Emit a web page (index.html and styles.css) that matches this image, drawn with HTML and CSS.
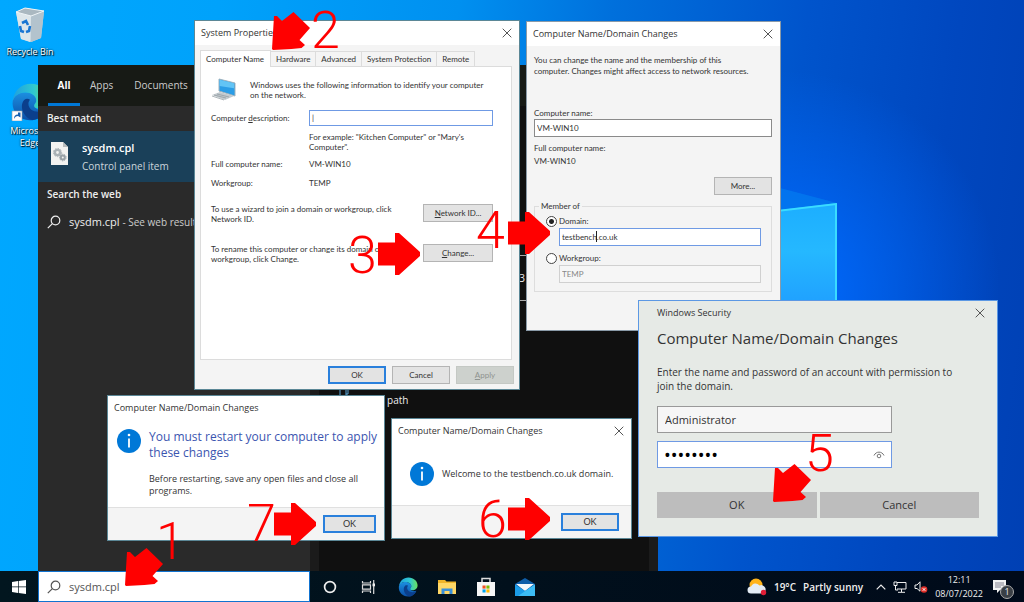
FILE: index.html
```html
<!DOCTYPE html>
<html lang="en">
<head>
<meta charset="utf-8">
<title>Join a domain</title>
<link rel="stylesheet" href="styles.css">
</head>
<body>
<svg width="0" height="0" class="defs" aria-hidden="true">
  <defs>
    <linearGradient id="edgeA" x1="0" y1="0" x2="1" y2="0"><stop offset="0" stop-color="#1ea0e0"/><stop offset=".6" stop-color="#30c8d0"/><stop offset="1" stop-color="#6be25a"/></linearGradient>
    <linearGradient id="edgeB" x1="0" y1="0" x2="0" y2="1"><stop offset="0" stop-color="#1c8fe0"/><stop offset="1" stop-color="#0a4fa8"/></linearGradient>
    <symbol id="edge" viewBox="0 0 24 24">
      <path fill="url(#edgeB)" d="M1 13C1 8 5 6 9 6c5 0 7 3 7 5 0 1-.6 1.800-1 2.300-.6 2.700 2.500 4.700 7 3.200C20 21 16.500 23.500 12 23.500 5 23.500 1 18 1 13z"/>
      <path fill="url(#edgeA)" d="M1 12C1.500 5 6.500.5 12.500.5c6.500 0 11 4.500 11 9.500 0 4-3 6-6 6-2.500 0-3.500-1-2.500-2.700.5-.8 1-1.300 1-2.300 0-2-2-5-7-5-4 0-7.500 2.500-8 6z"/>
      <path fill="#0b3f8c" d="M8.500 10.500C5 14 7.500 21.500 13.500 23.400 17 23.200 20 21 22 17c-5 2.500-11 1-11-4 0-1 .5-2 1-2.500-1.200-.7-2.500-.7-3.500 0z"/>
    </symbol>
    <symbol id="close" viewBox="0 0 10 10"><path d="M.7.7l8.600 8.600M9.300.7L.7 9.300" stroke="#555" stroke-width="1" fill="none"/></symbol>
    <symbol id="info" viewBox="0 0 24 24"><circle cx="12" cy="12" r="12" fill="#0078d7"/><circle cx="12" cy="6" r="1.300" fill="#fff"/><path d="M12 9.500v9" stroke="#fff" stroke-width="1.800"/></symbol>
    <symbol id="lens" viewBox="0 0 14 14"><circle cx="8.500" cy="5.500" r="4.300" fill="none" stroke="currentColor" stroke-width="1.200"/><path d="M5.400 8.600L.8 13.200" stroke="currentColor" stroke-width="1.200"/></symbol>
    <symbol id="arrow-right" viewBox="0 0 42 42"><path fill="#f00" d="M0 9.500h17V0h4l21 19v4L21 42h-4v-9.500H0z"/></symbol>
    <symbol id="arrow-down" viewBox="0 0 38 38"><path fill="#f00" d="M2 4h3l5 5L21.500 0 38 16 27.500 28l5.500 5-3.500 3-10 1L1 38 0 37z"/></symbol>
  </defs>
</svg>

<div class="screen">
  <main class="desktop">
    <svg class="wallpaper-pane" viewBox="0 0 160 124" aria-hidden="true">
      <defs><linearGradient id="pane" x1="0" y1="0" x2="0" y2="1"><stop offset="0" stop-color="#1caeff"/><stop offset=".45" stop-color="#25b8ff"/><stop offset="1" stop-color="#1f9eff"/></linearGradient></defs>
      <path d="M60 0v27l77-10L80 2z" fill="#0590f5" opacity=".4"/>
      <path d="M0 34l137-17v107H0z" fill="url(#pane)"/>
      <path d="M0 34l136-16v106" fill="none" stroke="#3adcff" stroke-width="2"/>
    </svg>

    <a href="#" class="shortcut shortcut-bin">
      <svg class="shortcut-icon" viewBox="0 0 32 36" aria-hidden="true">
        <path d="M2 5l9-4 19 3-3 27-10 4-10-3z" fill="#c9d6de"/>
        <path d="M2 5l15 4-1 26-9-3z" fill="#dde6ea"/>
        <path d="M17 9l13-5-3 27-10 4z" fill="#b3c3cd"/>
        <path d="M2 5l9-4 19 3-13 5z" fill="#aab8c0" stroke="#eef4f7"/>
        <path d="M8 16l4-2 2 4M16 19l-1 5-3 1M10 25l-3-1-1-5" fill="none" stroke="#1976d2" stroke-width="2.600"/>
      </svg>
      <span>Recycle Bin</span>
    </a>
    <a href="#" class="shortcut shortcut-edge">
      <svg class="shortcut-icon edge-big" viewBox="0 0 38 38" aria-hidden="true">
        <use href="#edge" width="38" height="38"/>
        <path d="M1 28h10v10H1z" fill="#fff" stroke="#8a9aa5" stroke-width=".6"/>
        <path d="M3 36c0-3 1-4.500 4-4.500V29.500h2.500v5L7 33c-2 0-3 1-4 3z" fill="#1660b0"/>
      </svg>
      <span>Microsoft Edge</span>
    </a>

    <section class="search-panel" aria-label="Search">
      <nav class="scopes">
        <a href="#" class="scope scope-active">All</a>
        <a href="#" class="scope">Apps</a>
        <a href="#" class="scope">Documents</a>
      </nav>
      <div class="results">
        <div class="results-list">
          <h2>Best match</h2>
          <a href="#" class="best">
            <svg class="file-icon" viewBox="0 0 17 23" aria-hidden="true"><path d="M0 0h12l5 5v18H0z" fill="#f2f2f0"/><path d="M12 0v5h5z" fill="#b9bdbd"/><circle cx="6.500" cy="10.500" r="2.600" fill="none" stroke="#aab2b6" stroke-width="2.400"/><circle cx="6.500" cy="10.500" r="4.100" fill="none" stroke="#aab2b6" stroke-dasharray="1.500 1.200"/><circle cx="11.800" cy="15.500" r="2" fill="none" stroke="#98a1a6" stroke-width="2"/><circle cx="11.800" cy="15.500" r="3.300" fill="none" stroke="#98a1a6" stroke-dasharray="1.300 1"/></svg>
            <span class="best-text"><strong>sysdm.cpl</strong><span>Control panel item</span></span>
          </a>
          <h2>Search the web</h2>
          <a href="#" class="web-row"><svg class="lens" aria-hidden="true"><use href="#lens"/></svg><span>sysdm.cpl <small>- See web results</small></span></a>
        </div>
        <div class="results-detail">
          <div class="detail-card">sysdm13</div>
          <div class="detail-action">
            <svg class="copy-icon" viewBox="0 0 10 12" aria-hidden="true"><path d="M3 3V1h4l2 2v6H7M1 3h4l2 2v6H1z" fill="none" stroke="#58a6d8"/></svg>
            <span>Copy path</span>
          </div>
        </div>
      </div>
    </section>

    <section class="window win-system">
      <header class="titlebar"><h1>System Properties</h1><button class="close" aria-label="Close"><svg><use href="#close"/></svg></button></header>
      <div class="tabs">
        <button class="tab tab-active">Computer Name</button><button class="tab">Hardware</button><button class="tab">Advanced</button><button class="tab">System Protection</button><button class="tab">Remote</button>
      </div>
      <div class="tab-page">
        <div class="intro">
          <svg class="pc-icon" viewBox="0 0 26 24" aria-hidden="true"><path d="M8 1l16 4v13L8 13z" fill="#2b9de6" stroke="#9fb2bd"/><path d="M8.500 1.800L23 5.300v5L8.500 8z" fill="#62c4f5"/><path d="M1 17l8-3 14 4-9 4z" fill="#c3cace"/><path d="M3 17l12 3M6 16l12 3M1 18l12 4" stroke="#8e989e" stroke-width=".7"/></svg>
          <p>Windows uses the following information to identify your computer on the network.</p>
        </div>
        <div class="facts">
          <label for="desc">Computer <u>d</u>escription:</label>
          <div><input id="desc" class="field field-focus" type="text" value="|"><p class="hint">For example: "Kitchen Computer" or "Mary's Computer".</p></div>
          <span>Full computer name:</span><span>VM-WIN10</span>
          <span>Workgroup:</span><span>TEMP</span>
        </div>
        <div class="task"><p>To use a wizard to join a domain or workgroup, click Network ID.</p><button class="btn btn-wide"><u>N</u>etwork ID...</button></div>
        <div class="task"><p>To rename this computer or change its domain or workgroup, click Change.</p><button class="btn btn-wide"><u>C</u>hange...</button></div>
      </div>
      <footer class="buttons"><button class="btn btn-default">OK</button><button class="btn">Cancel</button><button class="btn" disabled><u>A</u>pply</button></footer>
    </section>

    <section class="window win-domain">
      <header class="titlebar"><h1>Computer Name/Domain Changes</h1><button class="close" aria-label="Close"><svg><use href="#close"/></svg></button></header>
      <div class="domain-body">
        <p class="domain-intro">You can change the name and the membership of this computer. Changes might affect access to network resources.</p>
        <label for="cname">Computer name:</label>
        <input id="cname" class="field" type="text" value="VM-WIN10">
        <p class="full-name">Full computer name:<br>VM-WIN10</p>
        <div class="more"><button class="btn">More...</button></div>
        <fieldset class="member">
          <legend>Member of</legend>
          <label class="choice"><input type="radio" name="member" checked>Domain:</label>
          <div class="member-value editing"><input class="field field-focus" type="text" aria-label="Domain" value="testbench.co.uk"></div>
          <label class="choice"><input type="radio" name="member">Workgroup:</label>
          <div class="member-value"><input class="field" type="text" aria-label="Workgroup" value="TEMP" disabled></div>
        </fieldset>
      </div>
    </section>

    <section class="window win-restart">
      <header class="titlebar"><h1>Computer Name/Domain Changes</h1></header>
      <div class="message">
        <svg class="info" aria-hidden="true"><use href="#info"/></svg>
        <div><h2>You must restart your computer to apply these changes</h2><p>Before restarting, save any open files and close all programs.</p></div>
      </div>
      <footer class="message-foot"><button class="btn btn-default">OK</button></footer>
    </section>

    <section class="window win-welcome">
      <header class="titlebar"><h1>Computer Name/Domain Changes</h1><button class="close" aria-label="Close"><svg><use href="#close"/></svg></button></header>
      <div class="message">
        <svg class="info" aria-hidden="true"><use href="#info"/></svg>
        <p>Welcome to the testbench.co.uk domain.</p>
      </div>
      <footer class="message-foot"><button class="btn btn-default">OK</button></footer>
    </section>

    <section class="window win-security">
      <header class="titlebar"><h1>Windows Security</h1><button class="close" aria-label="Close"><svg><use href="#close"/></svg></button></header>
      <div class="security-body">
        <h2>Computer Name/Domain Changes</h2>
        <p>Enter the name and password of an account with permission to join the domain.</p>
        <input class="credential" type="text" aria-label="User name" value="Administrator">
        <div class="password">
          <input type="password" aria-label="Password" value="password">
          <svg class="eye" viewBox="0 0 12 8" aria-hidden="true"><path d="M1 4.500C3 0 9 0 11 4.500" fill="none" stroke="#777"/><circle cx="6" cy="5" r="1.800" fill="none" stroke="#777"/></svg>
        </div>
        <div class="security-actions"><button>OK</button><button>Cancel</button></div>
      </div>
    </section>
  </main>

  <footer class="taskbar">
    <button class="task-btn start" aria-label="Start"><svg width="14" height="14" viewBox="0 0 14 14"><path d="M0 2l6-.9v5.500H0zM6.700 1L14 0v6.600H6.700zM0 7.300h6v5.600L0 12zM6.700 7.300H14V14l-7.300-1z" fill="#fff"/></svg></button>
    <div class="searchbox"><svg class="lens" aria-hidden="true"><use href="#lens"/></svg><input type="text" aria-label="Search" value="sysdm.cpl"></div>
    <div class="apps">
      <button class="task-btn" aria-label="Cortana"><svg width="14" height="14" viewBox="0 0 14 14"><circle cx="7" cy="7" r="5.400" fill="none" stroke="#eee" stroke-width="1.700"/></svg></button>
      <button class="task-btn" aria-label="Task View"><svg width="16" height="14" viewBox="0 0 16 14"><path d="M1.500 1v2h8V1M1.500 13v-2h8v2M1.500 4.800h8v4.400h-8zM12.700 0v14" fill="none" stroke="#ddd" stroke-width="1.200"/><path d="M11.500 3.500h2.500v2.800h-2.500z" fill="#eee"/></svg></button>
      <button class="task-btn" aria-label="Microsoft Edge"><svg width="20" height="20"><use href="#edge"/></svg></button>
      <button class="task-btn" aria-label="File Explorer"><svg width="18" height="16" viewBox="0 0 18 16"><path d="M0 1h7l1.500 1.500H18V14H0z" fill="#f0b429"/><path d="M0 4h18v11H0z" fill="#ffd766"/><path d="M3.500 15V9.500h11V15h-3v-3H6.500v3z" fill="#3a8fd8"/></svg></button>
      <button class="task-btn" aria-label="Microsoft Store"><svg width="20" height="20" viewBox="0 0 20 20"><path d="M6 5V1.500h8V5" fill="none" stroke="#ddd" stroke-width="1.500"/><path d="M1 5h18v14H1z" fill="#f6f6f6"/><path d="M6.500 8.500H9.600v3.100H6.500z" fill="#f25022"/><path d="M10.400 8.500h3.100v3.100h-3.100z" fill="#7fba00"/><path d="M6.500 12.400h3.100v3.100H6.500z" fill="#00a4ef"/><path d="M10.400 12.400h3.100v3.100h-3.100z" fill="#ffb900"/></svg></button>
      <button class="task-btn" aria-label="Mail"><svg width="20" height="20" viewBox="0 0 20 20"><path d="M0 7l10-6 10 6v12H0z" fill="#0f5ea8"/><path d="M1 7h18l-9 7z" fill="#f5f8fa"/><path d="M0 7.500l10 6.500 10-6.500V19H0z" fill="#1b9ce8"/><path d="M20 7.500V19H3z" fill="#3cbcf5"/></svg></button>
    </div>
    <div class="tray">
      <button class="weather"><svg width="20" height="18" viewBox="0 0 20 18" aria-hidden="true"><circle cx="9" cy="7" r="6.500" fill="#ffb31a"/><path d="M4 15.500a3.500 3.500 0 0 1 0-7 5 5 0 0 1 8.500-1 4 4 0 0 1 3.500 8z" fill="#e4ecf5"/><circle cx="16.500" cy="14.500" r="2.700" fill="#e01e37"/></svg><span>19°C</span><span>Partly sunny</span></button>
      <svg width="10" height="6" viewBox="0 0 10 6" aria-hidden="true"><path d="M.7 5.300L5 1l4.300 4.300" fill="none" stroke="#eee" stroke-width="1.200"/></svg>
      <svg width="14" height="12" viewBox="0 0 14 12" aria-hidden="true"><path d="M4 1.500h9v6.500H4M8.500 8v3M5 11.300h7M1 1h3v3.500H1zM2.500 4.500V9H5" fill="none" stroke="#eee"/></svg>
      <svg width="14" height="14" viewBox="0 0 14 14" aria-hidden="true"><path d="M1 5h2l3-3.200v9.400L3 8.500H1z" fill="none" stroke="#eee"/><circle cx="10" cy="9.500" r="3.300" fill="#e0302a"/><path d="M8.700 8.200l2.600 2.600m0-2.600l-2.600 2.600" stroke="#fff"/></svg>
      <time class="clock"><span>12:11</span><span>08/07/2022</span></time>
      <button class="notify" aria-label="Notifications"><svg width="13" height="13" viewBox="0 0 13 13"><path d="M0 0h13v10H7l-3 3v-3H0z" fill="#f2f2f2"/><path d="M2 3h9M2 5h9M2 7h6" stroke="#667" stroke-width=".8"/></svg><span class="badge">1</span></button>
    </div>
  </footer>

  <svg class="annotations" width="1024" height="602" viewBox="0 0 1024 602">
    <g class="steps">
      <text x="156" y="559">1</text><text x="311" y="48">2</text><text x="348" y="273">3</text><text x="476" y="248">4</text><text x="805" y="471">5</text><text x="478" y="537">6</text><text x="247" y="541">7</text>
    </g>
    <use href="#arrow-down" x="125" y="548" width="38" height="38"/>
    <use href="#arrow-down" x="272" y="12" width="38" height="38"/>
    <use href="#arrow-right" x="378" y="233" width="42" height="42"/>
    <use href="#arrow-right" x="508" y="212" width="42" height="42"/>
    <use href="#arrow-down" x="773" y="464" width="38" height="38"/>
    <use href="#arrow-right" x="508" y="498" width="42" height="42"/>
    <use href="#arrow-right" x="274" y="503" width="42" height="42"/>
  </svg>
</div>
</body>
</html>
```

FILE: styles.css
```css
* { box-sizing: border-box; }

body {
  margin: 0;
  font-family: "Open Sans", "Noto Sans", sans-serif;
  font-size: 10px;
  color: #333;
}

h1, h2, p { margin: 0; font-weight: 400; }
button, input { font: inherit; color: inherit; margin: 0; }
button { padding: 0; border: 0; background: none; }
a { color: inherit; text-decoration: none; }
svg { display: block; flex: none; }
.defs { position: absolute; }

.screen {
  position: relative;
  display: flex;
  flex-direction: column;
  height: 100vh;
  overflow: hidden;
}

.desktop {
  position: relative;
  flex: 1;
  background:
    radial-gradient(circle at 780px 290px, #0074ff 0, rgba(0, 106, 255, .75) 60px, rgba(0, 90, 235, 0) 220px),
    linear-gradient(97deg, #00a8ff 0%, #00a2fb 20%, #0090f0 42%, #0070dc 56%, #0054cc 74%, #0047bf 88%, #0040b4 100%);
}

.wallpaper-pane { position: absolute; left: 700px; top: 186px; width: 160px; height: 124px; }

/* Desktop shortcuts */
.shortcut {
  position: absolute;
  display: flex;
  flex-direction: column;
  align-items: center;
  width: 60px;
  color: #fff;
  font-size: 9px;
  line-height: 12px;
  text-align: center;
  text-shadow: 1px 1px 1px #000, 0 0 2px #023;
}
.shortcut-bin { left: 0; top: 7px; gap: 3px; }
.shortcut-edge { left: 0; top: 83px; gap: 4px; }
.shortcut-edge span { width: 50px; }
.shortcut-icon { width: 32px; height: 36px; }
.edge-big { width: 38px; height: 38px; }

/* Search flyout */
.search-panel {
  position: absolute;
  left: 38px;
  top: 65px;
  bottom: 0;
  width: 620px;
  display: flex;
  flex-direction: column;
  background: #101010;
  color: #eee;
}
.scopes { display: flex; gap: 21px; height: 41px; padding: 0 10px; background: #171a15; color: #ccc; }
.scope { line-height: 40px; }
.scope-active { width: 32px; text-align: center; font-weight: 700; color: #fff; border-bottom: 3px solid #0078d7; }
.scope-active + .scope { margin-left: -11px; }
.results { flex: 1; display: flex; }
.results-list { width: 272px; background: #2a2a2a; overflow: hidden; }
.results-list h2 { padding: 0 9px; font-size: 10px; line-height: 25px; font-weight: 600; }
.best { display: flex; align-items: center; gap: 14px; height: 51px; padding: 0 13px; background: #1a4059; }
.file-icon { width: 17px; height: 23px; margin-bottom: 7px; }
.best-text { display: flex; flex-direction: column; line-height: 18px; color: #ccd6dc; }
.best-text strong { font-size: 11px; font-weight: 600; color: #fff; }
.web-row { display: flex; align-items: center; gap: 8px; padding: 0 9px; font-size: 11px; line-height: 30px; white-space: nowrap; }
.web-row small { font-size: 10px; color: #ccc; }
.lens { width: 14px; height: 14px; }
.results-detail { flex: 1; display: flex; flex-direction: column; gap: 84px; padding: 149px 12px 0 20px; border-left: 9px solid #1b1b1b; border-right: 9px solid #1b1b1b; }
.detail-card { width: 200px; height: 46px; border: 1px solid #aaa; border-width: 1px 0; line-height: 44px; text-align: right; padding-right: 14px; }
.detail-action { display: flex; align-items: flex-start; gap: 12px; line-height: 14px; }
.detail-action span { padding-top: 8px; }
.copy-icon { width: 10px; height: 12px; }

/* Windows */
.window {
  position: absolute;
  display: flex;
  flex-direction: column;
  background: #f4f4f4;
  border: 1px solid #5b8796;
  font-family: Lato, "Open Sans", sans-serif;
  font-size: 8px;
  line-height: 10px;
}
.titlebar { display: flex; align-items: center; justify-content: space-between; height: 24px; padding: 0 7px 0 6px; background: #fff; font-family: "Open Sans", "Noto Sans", sans-serif; }
.titlebar h1 { font-size: 9px; }
.close { width: 10px; height: 10px; }
.close svg { width: 10px; height: 10px; }

.btn { width: 58px; height: 18px; background: #e3e3e3; border: 1px solid #b4b4b4; line-height: 14px; }
.btn-wide { width: 70px; }
.btn-default { border: 2px solid #2a80dc; line-height: 12px; }
.btn:disabled { background: #cdd1cd; border-color: #c4c8c4; color: #8f938f; }

.field { display: block; width: 100%; height: 18px; padding: 0 2px; background: #fff; border: 1px solid #8a8a8a; }
.field-focus { border-color: #6f9ae4; }
.field:disabled { background: #f6f6f6; border-color: #d0d0d0; color: #888; }

.win-system { left: 194px; top: 20px; width: 326px; }
.tabs { display: flex; align-items: flex-end; padding: 5px 5px 0; }
.tab { height: 15px; padding: 0 5px; border: 1px solid #dcdcdc; border-left: 0; border-bottom: 0; white-space: nowrap; line-height: 13px; }
.tab-active { height: 17px; margin-bottom: -1px; padding: 0 6px 0 5px; background: #fff; border-left: 1px solid #dcdcdc; position: relative; }
.tab-page { margin: 0 7px 0 5px; min-height: 294px; padding: 11px 18px 0 10px; background: #fff; border: 1px solid #dcdcdc; }
.intro { display: flex; gap: 13px; align-items: flex-start; }
.intro p { padding-top: 2px; }
.pc-icon { width: 26px; height: 24px; }
.facts { display: grid; grid-template-columns: 98px 1fr; row-gap: 9px; margin-top: 8px; padding-bottom: 16px; }
.facts label { padding-top: 3px; }
.facts .field { height: 16px; }
.hint { padding: 6px 20px 0 0; margin-bottom: -2px; }
.task { display: flex; justify-content: space-between; align-items: flex-start; height: 40px; }
.task p { width: 200px; }
.buttons { display: flex; justify-content: flex-end; gap: 6px; padding: 6px 5px 5px; }

.win-domain { left: 526px; top: 21px; width: 255px; border-color: #8a9aa8; }
.domain-body { display: flex; flex-direction: column; padding: 9px 8px 38px 7px; }
.domain-intro { line-height: 11px; padding: 0 16px 30px 0; }
.domain-body .full-name { padding-top: 5px; line-height: 13px; }
.domain-body > label { line-height: 12px; }
.more { display: flex; justify-content: flex-end; padding: 9px 0 6px; }
.member { display: flex; flex-direction: column; min-width: 0; margin: 0; padding: 4px 10px 8px 11px; border: 1px solid #ddd; }
.member legend { margin-left: -7px; padding: 0 2px; }
.choice { display: flex; align-items: center; gap: 2px; height: 12px; }
.choice input { appearance: none; width: 11px; height: 11px; border: 1px solid #444; border-radius: 50%; background: #fff; }
.choice input:checked { background: radial-gradient(circle, #222 0 2px, #fff 3px); }
.member-value { position: relative; margin: 1px 0 6px 13px; }
.member-value:last-child { margin-bottom: 0; }
.editing::after { content: ""; position: absolute; left: 37px; top: 3px; width: 1px; height: 11px; background: #222; }

.win-restart { left: 107px; top: 395px; width: 278px; }
.win-welcome { left: 391px; top: 418px; width: 241px; }
.message { display: flex; gap: 8px; padding: 9px 2px 10px 9px; background: #fff; font-family: "Open Sans", "Noto Sans", sans-serif; font-size: 9px; line-height: 12px; }
.message h2 { font-size: 12px; line-height: 16px; color: #3b55b0; padding-bottom: 12px; }
.info { width: 24px; height: 24px; }
.message-foot { display: flex; justify-content: flex-end; padding: 7px 8px; border-top: 1px solid #e0e0e0; font-size: 9px; }
.win-restart .btn { width: 53px; }
.win-welcome .message { align-items: center; padding: 19px 10px 19px 18px; }
.win-welcome .message-foot { padding: 7px 12px; }

.win-security { left: 638px; top: 300px; width: 360px; border-color: #5c98e4; background: #e6eae6; font-family: "Open Sans", "Noto Sans", sans-serif; }
.win-security .titlebar { background: none; padding: 0 12px 0 18px; }
.security-body { padding: 2px 18px 18px; font-size: 11px; line-height: 14px; }
.security-body h2 { font-size: 15px; line-height: 22px; padding-bottom: 16px; }
.security-body p { font-size: 10px; padding-right: 12px; }
.credential { display: block; width: 235px; height: 27px; margin: 13px 0 8px; padding: 0 7px; border: 1px solid #999; background: #f6f6f6; }
.password { display: flex; align-items: center; width: 235px; height: 27px; padding: 0 6px; border: 1px solid #6f9ae4; background: #fff; }
.password input { flex: 1; min-width: 0; height: 25px; border: 0; padding: 0; background: none; outline: 0; color: #000; font-size: 18px; }
.eye { width: 12px; height: 8px; }
.security-actions { display: grid; grid-template-columns: 1fr 1fr; gap: 3px; margin-top: 24px; }
.security-actions button { height: 26px; background: #bdbdbd; }

/* Taskbar */
.taskbar { display: flex; align-items: stretch; height: 31px; background: linear-gradient(90deg, #02161f, #01101c 50%, #000a1a); color: #eee; font-size: 11px; }
.task-btn { display: flex; align-items: center; justify-content: center; width: 39px; }
.start { width: 38px; }
.searchbox { display: flex; align-items: center; gap: 8px; width: 272px; padding: 0 8px; background: #fff; border: 1px solid #1173d0; color: #555; }
.searchbox input { flex: 1; min-width: 0; border: 0; padding: 0; outline: 0; }
.apps { display: flex; }
.tray { flex: 1; display: flex; align-items: center; justify-content: flex-end; gap: 7px; padding-right: 12px; }
.weather { display: flex; align-items: center; gap: 7px; margin-right: 6px; font-size: 10px; font-weight: 600; }
.clock { display: flex; flex-direction: column; align-items: center; font-size: 9px; line-height: 14px; }
.notify { position: relative; width: 22px; height: 20px; padding-left: 3px; }
.badge { position: absolute; right: -2px; bottom: -2px; width: 14px; height: 14px; border-radius: 50%; background: #3a3f45; border: 1px solid #aaa; font-size: 9px; line-height: 12px; }

/* Numbered steps */
.annotations { position: absolute; left: 0; top: 0; pointer-events: none; }
.steps text { font-family: Roboto, sans-serif; font-weight: 300; font-size: 52px; fill: #f00; }
```
